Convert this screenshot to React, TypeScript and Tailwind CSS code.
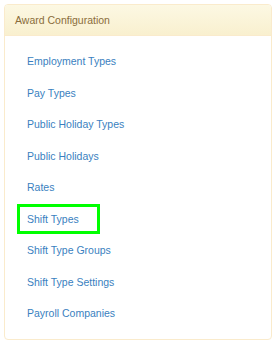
import React from "react";

const items = [
  "Employment Types",
  "Pay Types",
  "Public Holiday Types",
  "Public Holidays",
  "Rates",
  "Shift Types",
  "Shift Type Groups",
  "Shift Type Settings",
  "Payroll Companies",
];

export default function App() {
  return (
    <div className="w-[276px] h-[345px] bg-white p-[4px] pr-[4px]" style={{ fontFamily: '"Liberation Sans", Arial, sans-serif' }}>
      <div className="w-[268px] h-[336px] border border-[#faebcc] rounded-[4px] overflow-hidden flex flex-col">
        <div className="h-[31px] shrink-0 border-b border-[#faebcc] bg-gradient-to-b from-[#fcf8e3] to-[#f9f0cf] flex items-center pt-[1px] px-[10px] text-[10.5px] text-[#8a6d3b]">
          Award Configuration
        </div>
        <div className="flex flex-col pt-[10.5px] px-[22px]">
          {items.map((t) => (
            <div key={t} className="h-[31.5px] flex items-center relative">
              <span className="text-[10.5px] text-[#3a7fc0]">{t}</span>
              {t === "Shift Types" && (
                <div className="absolute left-[-10px] top-[0px] w-[83px] h-[30px] border-[3px] border-[#00ff00]" />
              )}
            </div>
          ))}
        </div>
      </div>
    </div>
  );
}
